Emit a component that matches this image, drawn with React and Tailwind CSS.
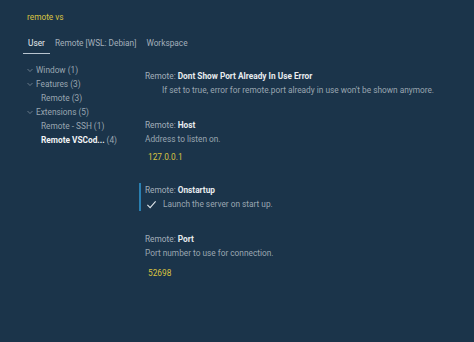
import React from "react";

const Chevron = () => (
  <svg width="8" height="8" viewBox="0 0 16 16" className="shrink-0">
    <path d="M3 6l5 5 5-5" fill="none" stroke="#8a97a3" strokeWidth="1.4" />
  </svg>
);

function Setting({ name, desc, value, indentDesc, boxed, check, valueGap = "mt-[4px]" }) {
  return (
    <div className={`pl-[4px] ${boxed ? "border-l-2 border-[#2a7fb0]" : "border-l-2 border-transparent"}`}>
      <div className="leading-[14px] text-[#a3afba]">
        Remote: <span className="font-bold text-[#e8ecef]">{name}</span>
      </div>
      <div className={`leading-[14px] flex items-center ${indentDesc ? "pl-[17px]" : ""}`}>
        {check && (
          <svg width="11" height="11" viewBox="0 0 16 16" className="mr-[6px] ml-[1px]">
            <path d="M2 8.5l4 4L14 3.5" fill="none" stroke="#dfe5ea" strokeWidth="1.6" />
          </svg>
        )}
        <span className="text-[#9aa6b1]">{desc}</span>
      </div>
      {value && <div className={`${valueGap} pl-[3px] leading-[14px] text-[#d9c341]`}>{value}</div>}
    </div>
  );
}

export default function App() {
  return (
    <div className="w-[474px] h-[342px] bg-[#1b344a] text-[8.3px] overflow-hidden" style={{ fontFamily: 'Roboto, "Open Sans", sans-serif' }}>
      <div className="pl-[27px] pt-[10px] leading-[14px] text-[#d9c341]">remote vs</div>
      <div className="mt-[12px] flex pl-[23px] text-[#a3afba] leading-[14px]">
        <div className="px-[5px] pb-[3px] border-b border-[#b8c4cf] text-[#e8ecef]">User</div>
        <div className="px-[5px]">Remote [WSL: Debian]</div>
        <div className="px-[5px]">Workspace</div>
      </div>
      <div className="flex mt-[6px]">
        <div className="w-[139px] pl-[26px] pt-[3px] text-[#9aa6b1] leading-[14px]">
          <div className="flex items-center gap-[2px]"><Chevron />Window (1)</div>
          <div className="flex items-center gap-[2px]"><Chevron />Features (3)</div>
          <div className="pl-[15px]">Remote (3)</div>
          <div className="flex items-center gap-[2px]"><Chevron />Extensions (5)</div>
          <div className="pl-[15px]">Remote - SSH (1)</div>
          <div className="pl-[15px]"><span className="font-bold text-[#f0f3f5]">Remote VSCod...</span> (4)</div>
        </div>
        <div className="flex-1 pt-[9px] flex flex-col">
          <Setting name="Dont Show Port Already In Use Error" desc="If set to true, error for remote.port already in use won't be shown anymore." indentDesc />
          <div className="h-[21px]" />
          <Setting name="Host" desc="Address to listen on." value="127.0.0.1" />
          <div className="h-[19px]" />
          <Setting name="Onstartup" desc="Launch the server on start up." boxed check />
          <div className="h-[21px]" />
          <Setting name="Port" desc="Port number to use for connection." value="52698" valueGap="mt-[6px]" />
        </div>
      </div>
    </div>
  );
}
